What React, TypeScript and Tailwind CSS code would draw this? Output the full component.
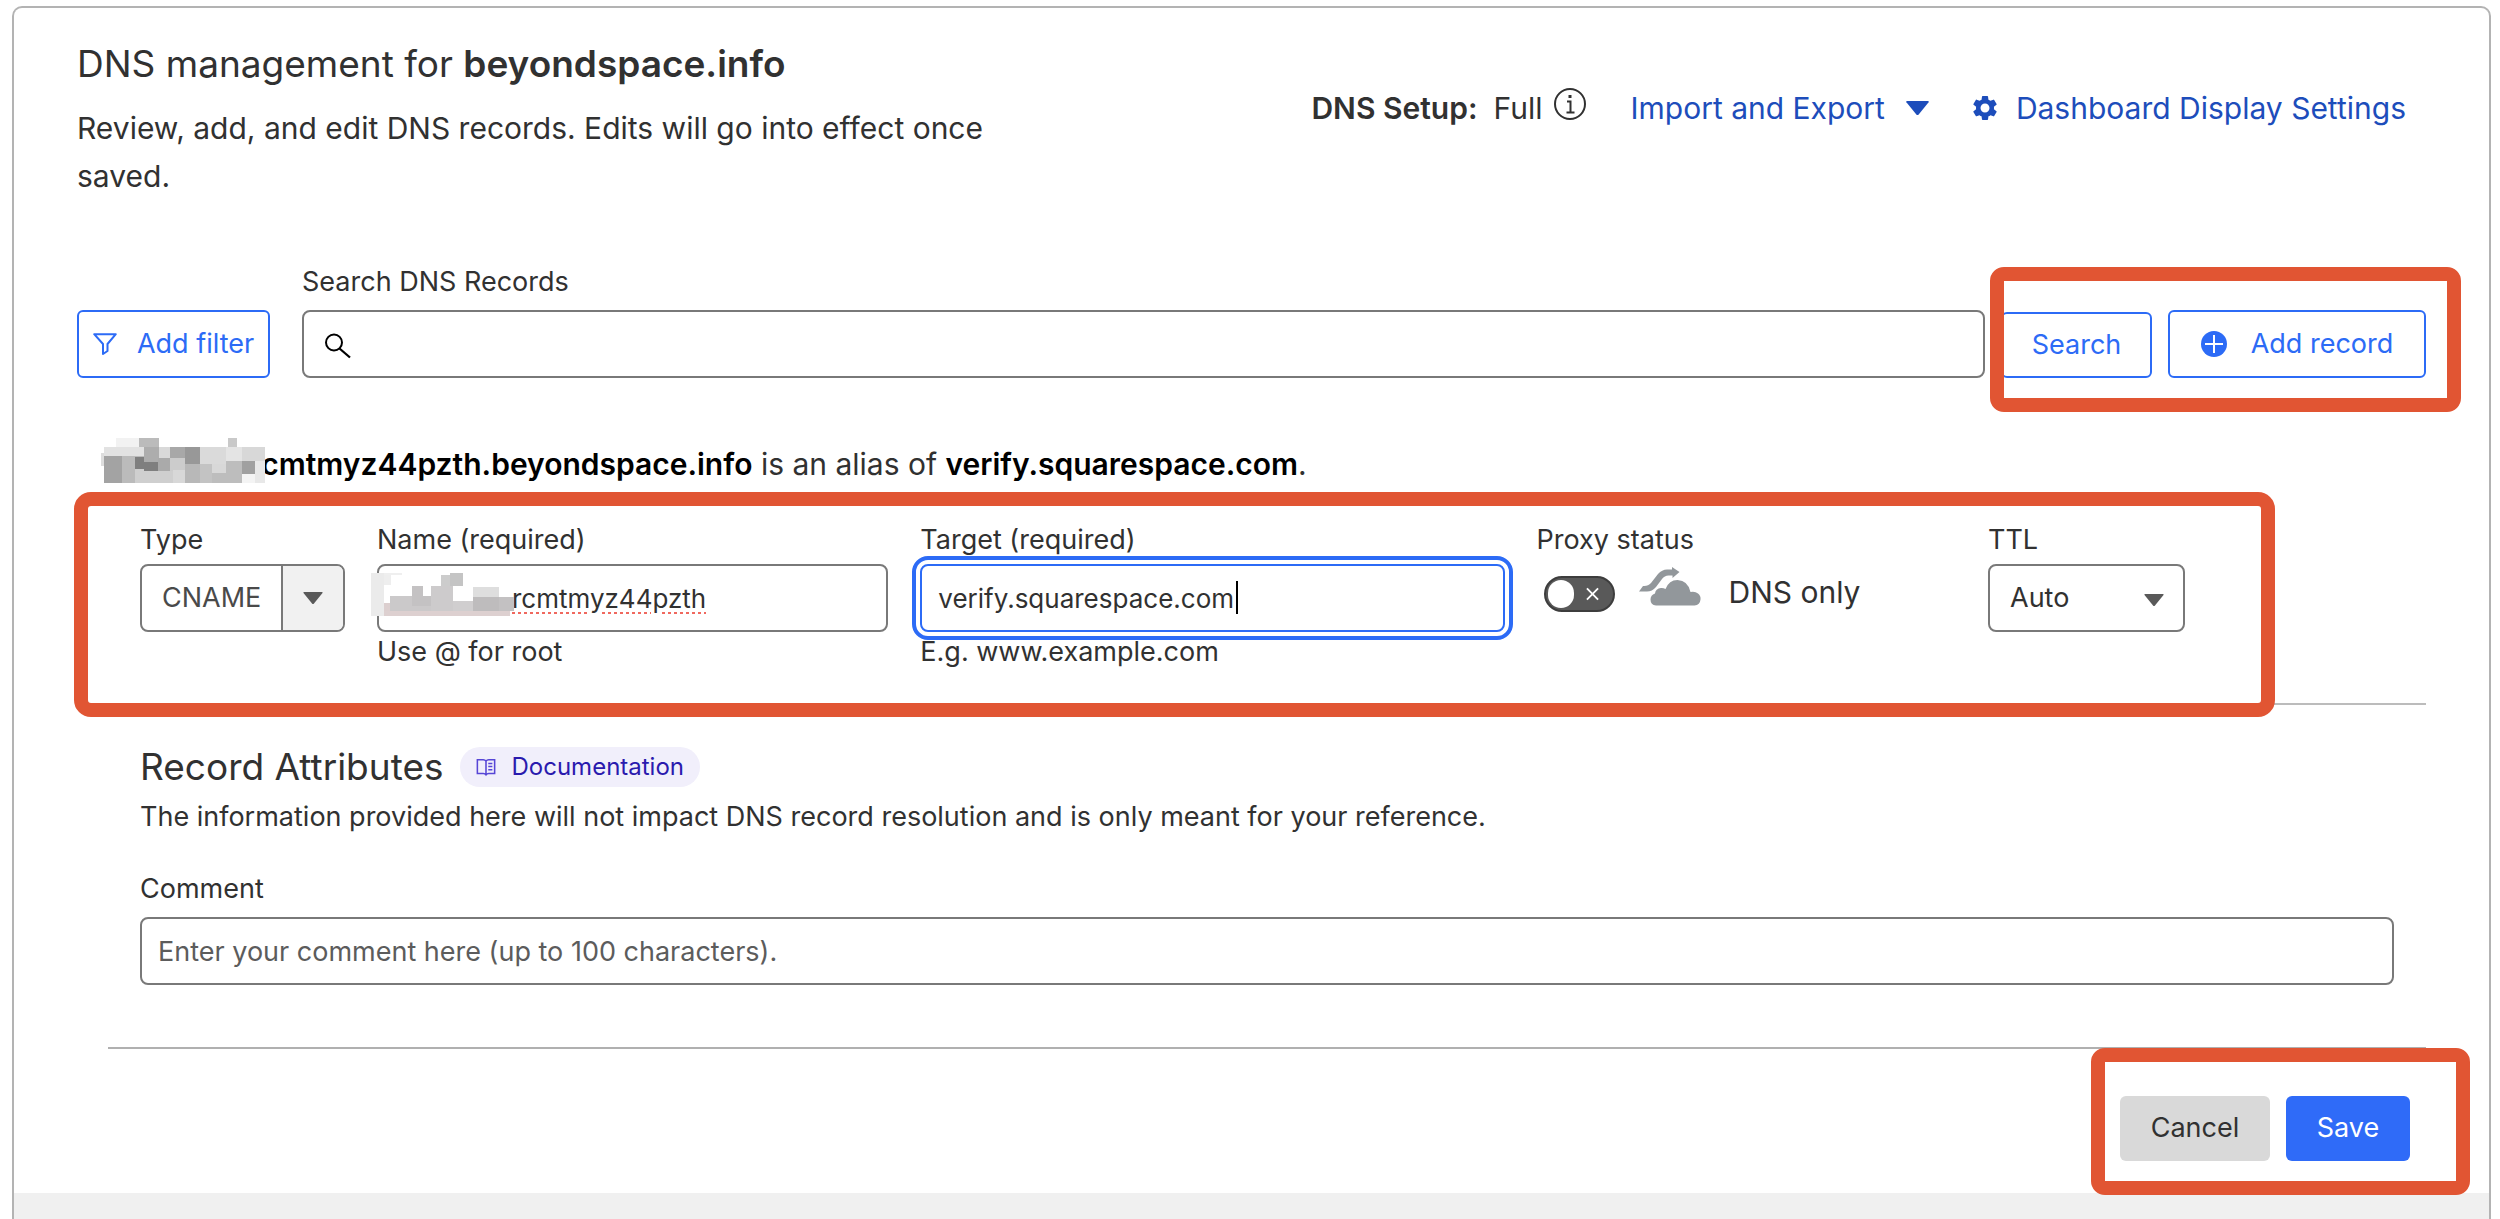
import { useState } from "react";
import { MdSettings } from "react-icons/md";

// [x, y, width, height, fill]
type Block = [number, number, number, number, string];

const aliasBlocks: Block[] = [
  [104, 54, 41, 27, "#f2f2f2"], [145, 54, 37, 27, "#bbbbbb"], [309, 54, 16, 27, "#c9c9c9"],
  [76, 98, 6, 40, "#dddddd"], [82, 81, 73, 27, "#e2e2e2"], [155, 81, 27, 44, "#adadad"],
  [182, 81, 21, 34, "#d9d9d9"], [203, 81, 27, 32, "#a8a8a8"], [230, 81, 27, 51, "#989898"],
  [257, 81, 47, 51, "#dadada"], [304, 81, 30, 42, "#e4e4e4"], [334, 81, 43, 42, "#d8d8d8"],
  [82, 108, 33, 80, "#a3a3a3"], [115, 108, 40, 80, "#bbbbbb"], [138, 145, 70, 43, "#cfcfcf"],
  [138, 110, 17, 35, "#7f7f7f"], [155, 125, 26, 27, "#7f7f7f"], [181, 115, 22, 37, "#aaaaaa"],
  [203, 113, 27, 40, "#cccccc"], [208, 150, 22, 38, "#d8d8d8"], [230, 132, 27, 56, "#b8b8b8"],
  [257, 132, 22, 56, "#c3c3c3"], [279, 132, 25, 26, "#d8d8d8"], [279, 158, 55, 30, "#bdbdbd"],
  [304, 123, 30, 35, "#bdbdbd"], [334, 123, 23, 39, "#a0a0a0"], [334, 162, 23, 26, "#f4f4f4"],
  [357, 123, 20, 65, "#e8e8e8"],
];

const nameBlocks: Block[] = [
  [567, 456, 24, 129, "#ebebeb"], [591, 456, 33, 7, "#efefef"], [591, 463, 12, 30, "#eeeeee"],
  [591, 545, 11, 25, "#dccfcf"], [602, 525, 40, 45, "#cbc9ca"], [642, 495, 20, 60, "#c4c2c3"],
  [642, 525, 35, 30, "#c4c2c3"], [642, 555, 35, 15, "#cbc9ca"], [677, 495, 40, 75, "#cdcbcc"],
  [695, 463, 22, 32, "#cccccc"], [711, 456, 24, 39, "#c4c4c4"], [717, 540, 36, 30, "#d0cecf"],
  [753, 498, 47, 30, "#dedede"], [753, 528, 47, 42, "#bebcbd"], [800, 528, 28, 42, "#c3c1c2"],
  [591, 570, 228, 15, "#ddd0d0"],
];

function Mosaic({ blocks, viewBox, className }: { blocks: Block[]; viewBox: string; className: string }) {
  return (
    <svg viewBox={viewBox} preserveAspectRatio="none" shapeRendering="crispEdges" className={className} aria-hidden="true">
      {blocks.map(([x, y, w, h, fill], i) => (
        <rect key={i} x={x} y={y} width={w} height={h} fill={fill} />
      ))}
    </svg>
  );
}

function Highlight({ className }: { className: string }) {
  return <div className={`pointer-events-none absolute border-[14px] border-[#e15533] ${className}`} />;
}

function Caret({ className }: { className: string }) {
  return (
    <svg viewBox="0 0 20 12" className={className} aria-hidden="true">
      <path d="M1 0h18q1 0 .5 1l-8.500 10.500q-1 1-2 0L.5 1Q0 0 1 0z" fill="currentColor" />
    </svg>
  );
}

function FilterIcon() {
  return (
    <svg viewBox="0 0 24 22" className="h-[22px] w-6" fill="none" stroke="currentColor" strokeWidth="2" strokeLinejoin="round" aria-hidden="true">
      <path d="M1.200 1.200h21.600L14.500 11v7l-4.500 3V11z" />
    </svg>
  );
}

function SearchIcon() {
  return (
    <svg viewBox="0 0 28 26" className="h-[26px] w-7" fill="none" stroke="#000" strokeWidth="2" aria-hidden="true">
      <circle cx="10" cy="9.500" r="8" />
      <path d="M15.500 15.500l10.500 9" strokeWidth="2.300" />
    </svg>
  );
}

function PlusIcon() {
  return (
    <svg viewBox="0 0 26 26" className="size-[26px]" aria-hidden="true">
      <circle cx="13" cy="13" r="13" fill="currentColor" />
      <path d="M13 4v18M4 13h18" stroke="#fff" strokeWidth="2" />
    </svg>
  );
}

function InfoIcon() {
  return (
    <svg viewBox="0 0 32 32" className="size-8" fill="none" stroke="currentColor" strokeWidth="2" aria-hidden="true">
      <circle cx="16" cy="16" r="15" />
      <path d="M13 13.500h3.500v11M12.500 24.500h8" />
      <path d="M14.500 8.500h3" strokeWidth="3" />
    </svg>
  );
}

function BookIcon() {
  return (
    <svg viewBox="0 0 22 20" className="h-[19px] w-5" fill="none" stroke="#5746d6" strokeWidth="1.700" aria-hidden="true">
      <path d="M11 3Q10 1.500 8 1.500H1.500v15H8q2 0 3 1.500 1-1.500 3-1.500h6.500v-15H14q-2 0-3 1.500zV18" />
      <path d="M13.500 5.500h4.500M13.500 9h4.500M13.500 12.500h4.500" />
    </svg>
  );
}

function CloudIcon() {
  return (
    <svg viewBox="0 0 62 39" className="h-[39px] w-[62px]" fill="#92979b" aria-hidden="true">
      <path d="M0 24.500L4 19q5 .5 8-3l7-9q4-4.500 9-4.500h5V0l7.500 5-7 6V8.500h-4q-4 0-6.500 3.500l-6 8q-4 4.500-9 4.500z" />
      <path d="M17 38.500q-5.500-.5-5.500-6 0-4.500 4.500-6 .5-5 6-5.500 2.500-.2 4.500 1Q30 13 38.500 13 49 13.500 51.500 25q4.500-1 7.500 1.500 3 2.500 2.500 6-.5 5.500-6 6z" />
    </svg>
  );
}

const labelText = "text-[27px] leading-10";
const fieldBox = "h-[68px] w-full rounded-lg border-2 border-[#797979] bg-white outline-none";
const outlineButton = "flex cursor-pointer items-center justify-center rounded-md border-2 border-[#2c6bf6] bg-white text-[27px] text-[#2c6bf6]";

export default function App() {
  const [name, setName] = useState("rcmtmyz44pzth");
  const [target, setTarget] = useState("verify.squarespace.com");
  const [proxied, setProxied] = useState(false);
  const [query, setQuery] = useState("");
  const [comment, setComment] = useState("");

  return (
    <div className="overflow-hidden bg-white pt-[6px] pr-[9px] pl-3 font-['Inter','Liberation_Sans',sans-serif] text-[#313131]">
      <main className="rounded-t-[10px] border-2 border-b-0 border-[#b3b3b3]">
        <div className="px-[63px] pt-8">
          <header className="flex items-start justify-between">
            <div className="max-w-[960px]">
              <h1 className="text-[37px] leading-12">
                DNS management for <b className="font-semibold">beyondspace.info</b>
              </h1>
              <p className="mt-4 text-[30px] leading-12">
                Review, add, and edit DNS records. Edits will go into effect once saved.
              </p>
            </div>
            <div className="flex items-center pt-11 pr-5 text-[30px] leading-12 whitespace-nowrap">
              <b className="font-semibold">DNS Setup:</b>
              <span className="ml-4">Full</span>
              <button type="button" aria-label="About DNS setup" className="mb-2 ml-3 cursor-pointer">
                <InfoIcon />
              </button>
              <button type="button" className="ml-11 flex cursor-pointer items-center gap-5 text-[#1d4dbb]">
                Import and Export
                <Caret className="h-[14px] w-[25px]" />
              </button>
              <a href="#settings" className="ml-10 flex items-center gap-4 text-[#1d4dbb]">
                <MdSettings className="size-[30px]" />
                Dashboard Display Settings
              </a>
            </div>
          </header>

          <form className="mt-[62px] flex items-end" onSubmit={(e) => e.preventDefault()}>
            <button type="button" className={`${outlineButton} h-[68px] w-[193px] shrink-0 gap-5`}>
              <FilterIcon />
              Add filter
            </button>
            <div className="ml-8 flex-1">
              <label htmlFor="search" className={`block ${labelText}`}>Search DNS Records</label>
              <div className="relative mt-2">
                <span className="pointer-events-none absolute top-[23px] left-[22px]">
                  <SearchIcon />
                </span>
                <input id="search" type="text" value={query} onChange={(e) => setQuery(e.target.value)} className={`${fieldBox} block pr-4 pl-16 text-[26px]`} />
              </div>
            </div>
            <div className="relative ml-4 flex items-end gap-4">
              <button type="submit" className={`${outlineButton} h-[66px] w-[151px]`}>Search</button>
              <button type="button" className={`${outlineButton} h-[68px] w-[258px] gap-6`}>
                <PlusIcon />
                Add record
              </button>
              <Highlight className="-top-[43px] -right-[35px] -bottom-[34px] -left-[11px] rounded-[14px]" />
            </div>
          </form>

          <section className="pl-[31px]">
            <p className="relative mt-[66px] pl-[142px] text-[30px] leading-10">
              <b className="font-semibold text-black">rcmtmyz44pzth.beyondspace.info</b> is an alias of{" "}
              <b className="font-semibold text-black">verify.squarespace.com</b>.
              <Mosaic blocks={aliasBlocks} viewBox="76 54 302 134" className="absolute -top-[6px] -left-[7px] h-[45px] w-[165px]" />
            </p>

            <div className="relative mt-9">
              <div className="grid grid-cols-[205px_512fr_585fr_420fr_197px] gap-x-8 border-b-2 border-[#bcbcbc] pr-[241px] pb-[31px] pl-8">
                <div>
                  <label htmlFor="type" className={`block ${labelText}`}>Type</label>
                  <div className="relative mt-1">
                    <select id="type" defaultValue="CNAME" className={`${fieldBox} appearance-none pl-5 text-[27px] text-[#4a4a4a]`}>
                      <option>A</option>
                      <option>AAAA</option>
                      <option>CNAME</option>
                      <option>TXT</option>
                    </select>
                    <span className="pointer-events-none absolute top-[2px] right-[2px] bottom-[2px] flex w-[62px] items-center justify-center rounded-r-md border-l-2 border-[#797979] bg-[#f1f1f1] text-[#595959]">
                      <Caret className="h-3 w-5" />
                    </span>
                  </div>
                </div>
                <div>
                  <label htmlFor="name" className={`block ${labelText}`}>Name (required)</label>
                  <div className="relative mt-1">
                    <input
                      id="name"
                      type="text"
                      value={name}
                      onChange={(e) => setName(e.target.value)}
                      className={`${fieldBox} block pl-[133px] text-[26px] underline decoration-[#f0685e] decoration-dotted decoration-3 underline-offset-4`}
                    />
                    <Mosaic blocks={nameBlocks} viewBox="567 456 262 129" className="absolute top-[9px] -left-[6px] h-[43px] w-36" />
                  </div>
                  <p className={labelText}>Use @ for root</p>
                </div>
                <div>
                  <label htmlFor="target" className={`block ${labelText}`}>Target (required)</label>
                  <div className="relative mt-1">
                    <input
                      id="target"
                      type="text"
                      value={target}
                      onChange={(e) => setTarget(e.target.value)}
                      className="block h-[68px] w-full rounded-lg border-2 border-[#2c6bf6] bg-white pl-4 text-[26px] outline-4 outline-offset-4 outline-[#2c6bf6]"
                    />
                    <span className="pointer-events-none absolute top-[17px] left-[316px] h-[33px] w-[2px] bg-black" />
                  </div>
                  <p className={labelText}>E.g. www.example.com</p>
                </div>
                <div>
                  <p id="proxy-label" className={labelText}>Proxy status</p>
                  <label className="mt-1 ml-[7px] flex h-[60px] cursor-pointer items-center">
                    <span className="relative flex h-9 w-[71px] items-center rounded-full border-2 border-[#3d3d3d] bg-[#595959] p-[2px] has-checked:flex-row-reverse">
                      <input type="checkbox" role="switch" aria-labelledby="proxy-label" checked={proxied} onChange={() => setProxied(!proxied)} className="absolute inset-0 cursor-pointer appearance-none" />
                      <span className="size-7 rounded-full bg-white" />
                      <svg viewBox="0 0 14 14" className="mx-3 size-[14px]" stroke="#fff" strokeWidth="2" aria-hidden="true">
                        <path d="M1 1l12 12M13 1L1 13" />
                      </svg>
                    </span>
                    <span className="mb-4 ml-6">
                      <CloudIcon />
                    </span>
                    <span className="mb-1 ml-7 text-[30px] leading-10">DNS only</span>
                  </label>
                </div>
                <div>
                  <label htmlFor="ttl" className={`block ${labelText}`}>TTL</label>
                  <div className="relative mt-1">
                    <select id="ttl" defaultValue="Auto" className={`${fieldBox} appearance-none pl-5 text-[27px]`}>
                      <option>Auto</option>
                      <option>1 min</option>
                      <option>1 hr</option>
                    </select>
                    <Caret className="pointer-events-none absolute top-[30px] right-[21px] h-3 w-5 text-[#595959]" />
                  </div>
                </div>
              </div>
              <Highlight className="-top-7 right-[151px] -bottom-3 -left-[34px] rounded-[17px]" />
            </div>

            <div className="border-b-2 border-[#b0b0b0] pt-[38px] pr-8 pb-[62px] pl-8">
              <div className="flex items-center gap-4">
                <h2 className="text-[37px] leading-12">Record Attributes</h2>
                <a href="#docs" className="flex h-10 items-center gap-4 rounded-full bg-[#f1effb] px-4 text-[24px] text-[#2a1aae]">
                  <BookIcon />
                  Documentation
                </a>
              </div>
              <p className={`mt-[6px] ${labelText}`}>
                The information provided here will not impact DNS record resolution and is only meant for your reference.
              </p>
              <label htmlFor="comment" className={`mt-8 block ${labelText}`}>Comment</label>
              <input
                id="comment"
                type="text"
                value={comment}
                onChange={(e) => setComment(e.target.value)}
                placeholder="Enter your comment here (up to 100 characters)."
                className={`${fieldBox} mt-2 block pl-4 text-[27px] placeholder:text-[#5c5c5c]`}
              />
            </div>

            <div className="flex justify-end pt-[47px] pr-4 pb-8">
              <div className="relative flex gap-4 text-[27px]">
                <button type="button" className="h-[65px] w-[150px] cursor-pointer rounded-md bg-[#d9d9d9]">Cancel</button>
                <button type="submit" className="h-[65px] w-[124px] cursor-pointer rounded-md bg-[#2f6bf8] text-white">Save</button>
                <Highlight className="-top-12 -right-[60px] -bottom-[34px] -left-[29px] rounded-[14px]" />
              </div>
            </div>
          </section>
        </div>
        <div className="h-[27px] bg-[#f0f0f0]" />
      </main>
    </div>
  );
}
